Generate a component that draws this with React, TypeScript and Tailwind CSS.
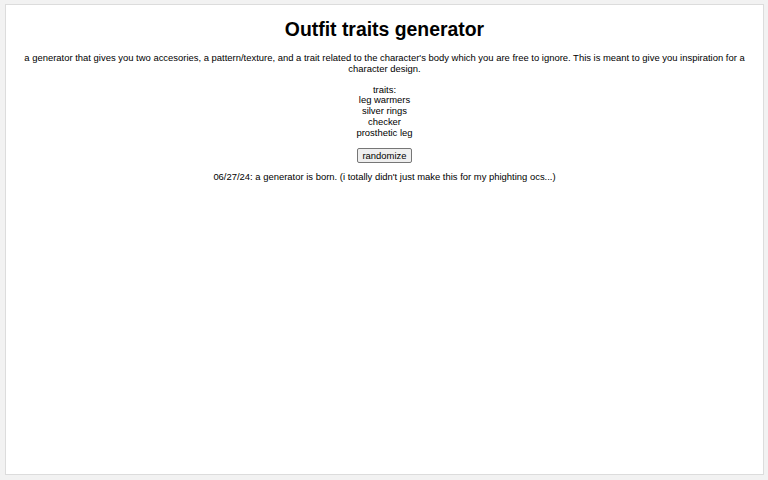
import { useState } from 'react';

const accessories = ['leg warmers', 'silver rings', 'bracelets', 'scarf', 'choker', 'gloves', 'earrings', 'belt'];
const patterns = ['checker', 'stripes', 'polka dots', 'plaid', 'floral', 'camo'];
const bodyTraits = ['prosthetic leg', 'freckles', 'scar', 'vitiligo', 'heterochromia', 'birthmark'];

function pick(list: string[]) {
  return list[Math.floor(Math.random() * list.length)];
}

export default function App() {
  const [traits, setTraits] = useState(['leg warmers', 'silver rings', 'checker', 'prosthetic leg']);

  function randomize() {
    const a = pick(accessories);
    let b = pick(accessories);
    while (b === a) b = pick(accessories);
    setTraits([a, b, pick(patterns), pick(bodyTraits)]);
  }

  return (
    <div className="min-h-screen bg-[#f2f2f2] pt-[4px] pl-[5px] pr-[4px]" style={{ fontFamily: '"Liberation Sans", Arial, sans-serif' }}>
      <div className="h-[471px] bg-white border border-[#dcdcdc] text-center text-black text-[9.45px] leading-[10.75px] px-4">
        <h1 className="pt-[13px] text-[19.4px] leading-[22px] font-bold">Outfit traits generator</h1>
        <p className="mt-[13px] -mx-[1px]">
          a generator that gives you two accesories, a pattern/texture, and a trait related to the character's body which you are free to ignore. This is meant to give you inspiration for a character design.
        </p>
        <div className="mt-[10px]">
          <div>traits:</div>
          {traits.map((t, i) => (
            <div key={i}>{t}</div>
          ))}
        </div>
        <button
          onClick={randomize}
          className="mt-[10px] px-[4px] py-[1px] bg-[#efefef] border border-[#767676] rounded-[2px] text-[9.45px] leading-[11px]"
        >
          randomize
        </button>
        <p className="mt-[9px]">06/27/24: a generator is born. (i totally didn't just make this for my phighting ocs...)</p>
      </div>
    </div>
  );
}
